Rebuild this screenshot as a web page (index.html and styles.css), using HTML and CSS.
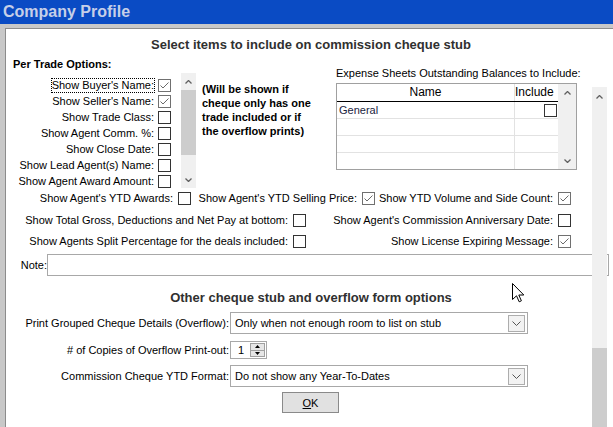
FILE: index.html
```html
<!DOCTYPE html>
<html>
<head>
<meta charset="utf-8">
<title>Company Profile</title>
<link rel="stylesheet" href="styles.css">
</head>
<body>
<div class="titlebar">Company Profile</div>
<div class="frame">
  <div class="panel">
    <div class="sec-title">Select items to include on commission cheque stub</div>

    <div class="upper">
      <div class="per-trade">
        <div class="pt-head">Per Trade Options:</div>
        <div class="pt-body">
          <div class="pt-list">
            <div class="cb-row focus"><span class="lbl">Show Buyer's Name:</span><span class="cb on"><svg width="11" height="11" viewBox="0 0 11 11"><polyline points="1.5,5.5 4,8 9.5,2.5" fill="none" stroke="#6a6a6a" stroke-width="1"/></svg></span></div>
            <div class="cb-row"><span class="lbl">Show Seller's Name:</span><span class="cb on"><svg width="11" height="11" viewBox="0 0 11 11"><polyline points="1.5,5.5 4,8 9.5,2.5" fill="none" stroke="#6a6a6a" stroke-width="1"/></svg></span></div>
            <div class="cb-row"><span class="lbl">Show Trade Class:</span><span class="cb"></span></div>
            <div class="cb-row"><span class="lbl">Show Agent Comm. %:</span><span class="cb"></span></div>
            <div class="cb-row"><span class="lbl">Show Close Date:</span><span class="cb"></span></div>
            <div class="cb-row"><span class="lbl">Show Lead Agent(s) Name:</span><span class="cb"></span></div>
            <div class="cb-row"><span class="lbl">Show Agent Award Amount:</span><span class="cb"></span></div>
          </div>
          <div class="mini-scroll">
            <div class="arr"><svg width="7" height="4" viewBox="0 0 7 4"><polyline points="0.5,3.5 3.5,0.5 6.5,3.5" fill="none" stroke="#606060" stroke-width="1.3"/></svg></div>
            <div class="mini-thumb"></div>
            <div class="mini-fill"></div>
            <div class="arr"><svg width="7" height="4" viewBox="0 0 7 4"><polyline points="0.5,0.5 3.5,3.5 6.5,0.5" fill="none" stroke="#606060" stroke-width="1.3"/></svg></div>
          </div>
          <div class="pt-note">(Will be shown if<br>cheque only has one<br>trade included or if<br>the overflow prints)</div>
        </div>
      </div>

      <div class="expense">
        <div class="ex-label">Expense Sheets Outstanding Balances to Include:</div>
        <div class="grid">
          <div class="gtable">
            <div class="ghead">
              <div class="gc-name hc">Name</div>
              <div class="gc-inc hi">Include</div>
            </div>
            <div class="grow">
              <div class="gc-name gtext">General</div>
              <div class="gc-inc gbox"><span class="cb"></span></div>
            </div>
            <div class="grow"><div class="gc-name"></div><div class="gc-inc"></div></div>
            <div class="grow"><div class="gc-name"></div><div class="gc-inc"></div></div>
            <div class="grow last"><div class="gc-name"></div><div class="gc-inc"></div></div>
          </div>
          <div class="gscroll">
            <div class="arr"><svg width="7" height="4" viewBox="0 0 7 4"><polyline points="0.5,3.5 3.5,0.5 6.5,3.5" fill="none" stroke="#606060" stroke-width="1.3"/></svg></div>
            <div class="arr"><svg width="7" height="4" viewBox="0 0 7 4"><polyline points="0.5,0.5 3.5,3.5 6.5,0.5" fill="none" stroke="#606060" stroke-width="1.3"/></svg></div>
          </div>
        </div>
      </div>
    </div>

    <div class="opt-row row-a">
      <div class="opt oa1"><span>Show Agent's YTD Awards:</span><span class="cb"></span></div>
      <div class="opt oa2"><span>Show Agent's YTD Selling Price:</span><span class="cb on"><svg width="11" height="11" viewBox="0 0 11 11"><polyline points="1.5,5.5 4,8 9.5,2.5" fill="none" stroke="#6a6a6a" stroke-width="1"/></svg></span></div>
      <div class="opt oa3"><span>Show YTD Volume and Side Count:</span><span class="cb on"><svg width="11" height="11" viewBox="0 0 11 11"><polyline points="1.5,5.5 4,8 9.5,2.5" fill="none" stroke="#6a6a6a" stroke-width="1"/></svg></span></div>
    </div>
    <div class="opt-row row-b">
      <div class="opt ob1"><span>Show Total Gross, Deductions and Net Pay at bottom:</span><span class="cb"></span></div>
      <div class="opt ob2"><span>Show Agent's Commission Anniversary Date:</span><span class="cb"></span></div>
    </div>
    <div class="opt-row row-c">
      <div class="opt ob1"><span>Show Agents Split Percentage for the deals included:</span><span class="cb"></span></div>
      <div class="opt ob2"><span>Show License Expiring Message:</span><span class="cb on"><svg width="11" height="11" viewBox="0 0 11 11"><polyline points="1.5,5.5 4,8 9.5,2.5" fill="none" stroke="#6a6a6a" stroke-width="1"/></svg></span></div>
    </div>

    <div class="note-row">
      <div class="note-lbl">Note:</div>
      <div class="note-input"></div>
    </div>

    <div class="sec-title second">Other cheque stub and overflow form options</div>

    <div class="form-row fr1">
      <div class="form-lbl">Print Grouped Cheque Details (Overflow):</div>
      <div class="select"><span>Only when not enough room to list on stub</span><span class="dd-btn"><svg width="9" height="5" viewBox="0 0 9 5"><polyline points="0.5,0.5 4.5,4.5 8.5,0.5" fill="none" stroke="#555" stroke-width="1"/></svg></span></div>
    </div>
    <div class="form-row fr2">
      <div class="form-lbl"># of Copies of Overflow Print-out:</div>
      <div class="spinner">
        <span class="spin-val">1</span>
        <span class="spin-btns">
          <span class="spin-b"><svg width="5" height="3" viewBox="0 0 5 3"><polygon points="0,3 2.5,0 5,3" fill="#000"/></svg></span>
          <span class="spin-b"><svg width="5" height="3" viewBox="0 0 5 3"><polygon points="0,0 2.5,3 5,0" fill="#000"/></svg></span>
        </span>
      </div>
    </div>
    <div class="form-row fr3">
      <div class="form-lbl">Commission Cheque YTD Format:</div>
      <div class="select"><span>Do not show any Year-To-Dates</span><span class="dd-btn"><svg width="9" height="5" viewBox="0 0 9 5"><polyline points="0.5,0.5 4.5,4.5 8.5,0.5" fill="none" stroke="#555" stroke-width="1"/></svg></span></div>
    </div>

    <div class="btn-row"><button class="ok"><u>O</u>K</button></div>

    <div class="main-scroll">
      <div class="arr ms-up"><svg width="7" height="4" viewBox="0 0 7 4"><polyline points="0.5,3.5 3.5,0.5 6.5,3.5" fill="none" stroke="#606060" stroke-width="1.3"/></svg></div>
      <div class="ms-track"></div>
      <div class="ms-thumb"></div>
    </div>

    <svg class="cursor" width="13" height="20" viewBox="0 0 13 20"><path d="M0.5 0.5 L0.5 16.5 L4.5 12.8 L7.2 18.8 L9.4 17.8 L6.8 12 L11.8 12 Z" fill="#fff" stroke="#000" stroke-width="1" stroke-linejoin="miter"/></svg>
  </div>
</div>
</body>
</html>
```

FILE: styles.css
```css
* { box-sizing: border-box; }
html, body { margin: 0; padding: 0; }
body {
  width: 613px;
  height: 427px;
  overflow: hidden;
  background: #fff;
  font-family: "Liberation Sans", Arial, sans-serif;
  font-size: 11px;
  color: #000;
}
.titlebar {
  height: 24px;
  background: #0a4bc4;
  color: #c6cfe8;
  font-size: 16px;
  font-weight: bold;
  line-height: 24px;
  padding-left: 3px;
}
.frame {
  height: 403px;
  background: #c8c8c8;
  padding: 4px 0 0 5px;
}
.panel {
  position: relative;
  height: 399px;
  background: #fff;
  border-top: 1px solid #8c8c8c;
  border-left: 1px solid #8c8c8c;
  overflow: hidden;
}
.sec-title {
  margin-top: 8px;
  padding-left: 3px;
  font-size: 13px;
  font-weight: bold;
  line-height: 15px;
  text-align: center;
  color: #303030;
}
.sec-title.second { margin-top: 14px; }

.upper { display: flex; margin-top: 6px; }
.per-trade { width: 330px; padding-left: 7px; }
.pt-head { font-weight: bold; line-height: 13px; }
.pt-body { display: flex; align-items: flex-start; margin-top: 2px; }
.pt-list { width: 168px; height: 115px; padding: 4px 10px 0 0; }
.cb-row {
  display: flex;
  justify-content: flex-end;
  align-items: center;
  height: 16px;
  gap: 3px;
}
.cb-row .lbl {
  border: 1px dotted transparent;
  line-height: 13px;
  white-space: nowrap;
}
.cb-row.focus .lbl { border-color: #000; }
.cb {
  display: block;
  flex: none;
  width: 13px;
  height: 13px;
  border: 1px solid #333;
  background: #fff;
}
.cb svg { display: block; }
.cb.on { border-color: #707070; }

.arr { display: flex; align-items: center; justify-content: center; height: 17px; flex: none; }
.arr svg { display: block; }
.mini-scroll {
  width: 15px;
  height: 115px;
  background: #f0f0f0;
  display: flex;
  flex-direction: column;
}
.mini-thumb { height: 65px; background: #cdcdcd; flex: none; }
.mini-fill { flex: 1; }
.pt-note {
  margin: 9px 0 0 6px;
  font-weight: bold;
  line-height: 14px;
  white-space: nowrap;
}

.expense { width: 241px; margin-top: 9px; }
.ex-label { line-height: 13px; white-space: nowrap; }
.grid {
  display: flex;
  height: 87px;
  margin-top: 3px;
  border: 1px solid #a0a0a0;
}
.gtable { width: 221px; }
.ghead {
  display: flex;
  height: 18px;
  border-bottom: 1px solid #000;
  font-size: 12px;
  line-height: 16px;
}
.gc-name { width: 178px; border-right: 1px solid #e2e2e2; }
.gc-inc { width: 43px; }
.hc { text-align: center; }
.hi { white-space: nowrap; }
.grow { display: flex; height: 17px; border-bottom: 1px solid #e2e2e2; }
.grow.last { height: 16px; border-bottom: none; }
.gtext { padding-left: 2px; line-height: 16px; color: #1a2440; }
.gbox { display: flex; justify-content: flex-end; align-items: center; padding-right: 1px; }
.gscroll {
  width: 18px;
  background: #f0f0f0;
  display: flex;
  flex-direction: column;
  justify-content: space-between;
}

.opt-row { display: flex; height: 13px; }
.row-a { margin-top: 4px; }
.row-b { margin-top: 9px; }
.row-c { margin-top: 8px; }
.opt {
  display: flex;
  justify-content: flex-end;
  align-items: center;
  gap: 5px;
  white-space: nowrap;
  line-height: 13px;
}
.oa1 { width: 185px; }
.oa2 { width: 184px; }
.oa3 { width: 196px; }
.ob1 { width: 300px; }
.ob2 { width: 265px; }

.note-row { display: flex; align-items: center; height: 22px; margin-top: 6px; }
.note-lbl { width: 41px; text-align: right; }
.note-input { width: 562px; height: 22px; border: 1px solid #a8a8a8; }

.form-row { display: flex; align-items: center; }
.fr1 { margin-top: 7px; }
.fr2 { margin-top: 7px; }
.fr3 { margin-top: 6px; }
.form-lbl { width: 224px; padding-right: 1px; text-align: right; white-space: nowrap; }
.select {
  width: 298px;
  height: 22px;
  border: 1px solid #a8a8a8;
  display: flex;
  align-items: center;
  justify-content: space-between;
  padding: 0 2px 0 4px;
  white-space: nowrap;
}
.dd-btn {
  width: 17px;
  height: 17px;
  border: 1px solid #adadad;
  background: #f2f2f2;
  display: flex;
  align-items: center;
  justify-content: center;
}
.dd-btn svg { display: block; }
.spinner {
  width: 37px;
  height: 18px;
  border: 1px solid #a8a8a8;
  display: flex;
  justify-content: space-between;
  align-items: stretch;
  padding: 1px;
}
.spin-val { padding-left: 6px; line-height: 14px; }
.spin-btns { width: 15px; display: flex; flex-direction: column; }
.spin-b {
  flex: 1;
  border: 1px solid #a0a0a0;
  background: #e6e6e6;
  display: flex;
  align-items: center;
  justify-content: center;
}
.spin-b + .spin-b { border-top: none; }
.spin-b svg { display: block; }

.btn-row { margin-top: 5px; padding-left: 276px; }
.ok {
  display: block;
  width: 57px;
  height: 21px;
  padding: 0;
  background: #e1e1e1;
  border: 1px solid #8a8a8a;
  font-family: "Liberation Sans", Arial, sans-serif;
  font-size: 11px;
  color: #000;
}

.main-scroll {
  position: absolute;
  left: 586px;
  top: 58px;
  bottom: 0;
  width: 15px;
  background: #f0f0f0;
  display: flex;
  flex-direction: column;
}
.ms-up { height: 20px; }
.ms-track { height: 241px; flex: none; }
.ms-thumb { flex: 1; background: #cdcdcd; }

.cursor { position: absolute; left: 506px; top: 254px; }
```
